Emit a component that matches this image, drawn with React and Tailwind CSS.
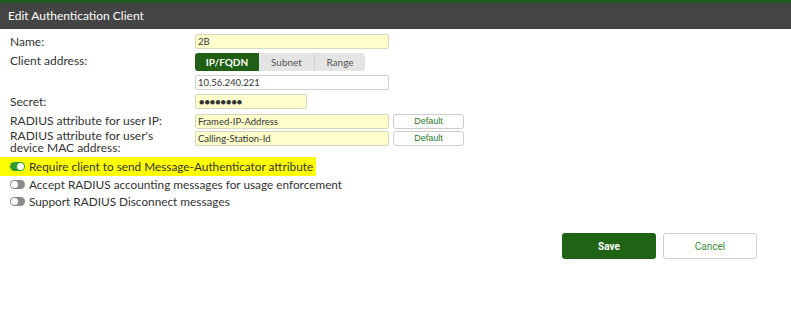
export default function App() {
  const lato = { fontFamily: 'Lato, "Open Sans", sans-serif' };
  const inputCls =
    "h-[15px] border border-[#d8d8c0] rounded-[2px] bg-[#ffffcc] px-[2px] text-[9.5px] leading-[13px] text-[#333]";
  return (
    <div className="w-[791px] h-[309px] bg-white overflow-hidden" style={lato}>
      <div className="h-[3px] bg-[#215c1e]" />
      <div className="h-[26px] bg-[#444444] flex items-center pl-[8px] text-white text-[12px]">
        Edit Authentication Client
      </div>
      <div className="pt-[3px] text-[12px] text-[#333]">
        {/* Name */}
        <div className="flex h-[19px] items-center">
          <div className="w-[195px] pl-[10px]">Name:</div>
          <div className={inputCls + " w-[194px]"}>2B</div>
        </div>
        {/* Client address */}
        <div className="flex h-[22px] items-center">
          <div className="w-[195px] pl-[10px] self-start pt-[1px]">Client address:</div>
          <div className="flex h-[18px] text-[10px] font-bold rounded-[3px] overflow-hidden">
            <div className="w-[64px] bg-[#1f5f16] text-white flex items-center justify-center">IP/FQDN</div>
            <div className="w-[56px] bg-[#e4e4e4] text-[#555] flex items-center justify-center border-r border-[#d0d0d0] font-normal">Subnet</div>
            <div className="w-[50px] bg-[#e4e4e4] text-[#555] flex items-center justify-center font-normal">Range</div>
          </div>
        </div>
        <div className="flex h-[19px] items-center">
          <div className="w-[195px]" />
          <div className="h-[15px] w-[194px] border border-[#d0d0d0] rounded-[2px] bg-white px-[2px] text-[9.5px] leading-[13px] text-[#333]">10.56.240.221</div>
        </div>
        {/* Secret */}
        <div className="flex h-[19px] items-center">
          <div className="w-[195px] pl-[10px]">Secret:</div>
          <div className={inputCls + " w-[112px] text-[9px] pl-[3px]"}>●●●●●●●●</div>
        </div>
        {/* RADIUS IP */}
        <div className="flex h-[20px] items-center">
          <div className="w-[195px] pl-[10px]">RADIUS attribute for user IP:</div>
          <div className={inputCls + " w-[194px]"}>Framed-IP-Address</div>
          <button className="ml-[4px] w-[71px] h-[15px] border border-[#cccccc] rounded-[3px] bg-white text-[9px] text-[#2a7a2a]" style={{ fontFamily: '"Liberation Sans", Arial, sans-serif' }}>Default</button>
        </div>
        {/* RADIUS MAC */}
        <div className="flex items-start h-[26px]">
          <div className="w-[195px] pl-[10px] leading-[12px] -mt-[1px]">RADIUS attribute for user's<br />device MAC address:</div>
          <div className={inputCls + " w-[194px]"}>Calling-Station-Id</div>
          <button className="ml-[4px] w-[71px] h-[15px] border border-[#cccccc] rounded-[3px] bg-white text-[9px] text-[#2a7a2a]" style={{ fontFamily: '"Liberation Sans", Arial, sans-serif' }}>Default</button>
        </div>
        {/* Toggles */}
        <div className="flex items-center h-[19px] bg-[#ffff00] w-[316px] pl-[10px] whitespace-nowrap">
          <div className="w-[15px] h-[9px] rounded-full bg-[#2e9b2a] relative mr-[4px] shrink-0">
            <div className="absolute right-[1px] top-[1px] w-[7px] h-[7px] rounded-full bg-white" />
          </div>
          <span className="text-[11.8px]">Require client to send Message-Authenticator attribute</span>
        </div>
        <div className="flex items-center h-[17px] pl-[10px] whitespace-nowrap">
          <div className="w-[15px] h-[9px] rounded-full bg-[#8a8a8a] relative mr-[4px] shrink-0">
            <div className="absolute left-[1px] top-[1px] w-[7px] h-[7px] rounded-full bg-white" />
          </div>
          <span className="text-[11.8px]">Accept RADIUS accounting messages for usage enforcement</span>
        </div>
        <div className="flex items-center h-[17px] pl-[10px] whitespace-nowrap">
          <div className="w-[15px] h-[9px] rounded-full bg-[#8a8a8a] relative mr-[4px] shrink-0">
            <div className="absolute left-[1px] top-[1px] w-[7px] h-[7px] rounded-full bg-white" />
          </div>
          <span className="text-[11.8px]">Support RADIUS Disconnect messages</span>
        </div>
        {/* Buttons */}
        <div className="flex justify-end gap-[7px] pr-[34px] mt-[23px]">
          <button className="w-[94px] h-[26px] rounded-[3px] bg-[#1f6414] text-white text-[10px] font-bold" style={{ fontFamily: 'Roboto, Arial, sans-serif' }}>Save</button>
          <button className="w-[94px] h-[26px] rounded-[3px] bg-white border border-[#d0d0d0] text-[#3a8a3a] text-[10px]" style={{ fontFamily: 'Roboto, Arial, sans-serif' }}>Cancel</button>
        </div>
      </div>
    </div>
  );
}
